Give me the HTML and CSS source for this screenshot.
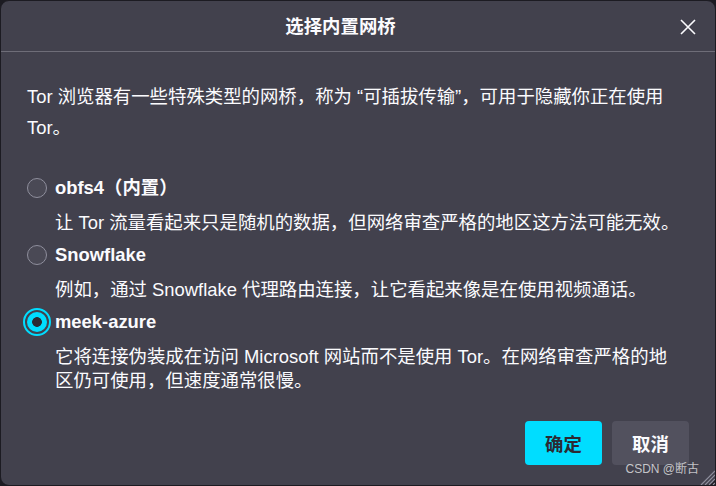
FILE: index.html
```html
<!DOCTYPE html>
<html lang="zh-CN">
<head>
<meta charset="utf-8">
<link rel="stylesheet" href="styles.css">
</head>
<body>
<div class="dialog">
  <div class="header">
    <div class="title">选择内置网桥</div>
    <button class="close" aria-label="关闭">
      <svg width="16" height="16" viewBox="0 0 16 16"><path d="M1 1 L15 15 M15 1 L1 15" stroke="#fbfbfe" stroke-width="1.6" fill="none"/></svg>
    </button>
  </div>
  <div class="body">
    <p class="intro">Tor 浏览器有一些特殊类型的网桥，称为 “可插拔传输”，可用于隐藏你正在使用<br>Tor。</p>
    <div class="options">
      <div class="option">
        <div class="label-row"><span class="radio"></span><span class="label">obfs4（内置）</span></div>
        <div class="desc">让 Tor 流量看起来只是随机的数据，但网络审查严格的地区这方法可能无效。</div>
      </div>
      <div class="option">
        <div class="label-row"><span class="radio"></span><span class="label">Snowflake</span></div>
        <div class="desc">例如，通过 Snowflake 代理路由连接，让它看起来像是在使用视频通话。</div>
      </div>
      <div class="option">
        <div class="label-row"><span class="radio checked"></span><span class="label">meek-azure</span></div>
        <div class="desc">它将连接伪装成在访问 Microsoft 网站而不是使用 Tor。在网络审查严格的地<br>区仍可使用，但速度通常很慢。</div>
      </div>
    </div>
  </div>
  <div class="footer">
    <button class="btn primary">确定</button>
    <button class="btn secondary">取消</button>
  </div>
  <div class="watermark">CSDN @断古</div>
  <svg class="grip" width="16" height="16" viewBox="0 0 16 16">
    <path d="M16 2 L2 16 M16 6 L6 16 M16 10 L10 16 M16 14 L14 16" stroke="#8f8f9d" stroke-width="1.2" fill="none"/>
  </svg>
</div>
</body>
</html>
```
FILE: styles.css
```css
* { box-sizing: border-box; }
html, body { margin: 0; padding: 0; }
body {
  width: 716px;
  height: 486px;
  background: #1c1b22;
  font-family: "Liberation Sans", "Noto Sans CJK SC", sans-serif;
  color: #fbfbfe;
  overflow: hidden;
}
.dialog {
  position: relative;
  width: 716px;
  height: 486px;
  background: #42414d;
  border: 1px solid #1c1b22;
  border-radius: 9px;
  display: flex;
  flex-direction: column;
}
.header {
  height: 51px;
  border-bottom: 1px solid #6e6d78;
  display: flex;
  align-items: center;
  justify-content: center;
  padding-right: 35px;
  position: relative;
  flex-shrink: 0;
}
.title {
  font-size: 18.4px;
  font-weight: bold;
  line-height: 24px;
  margin-top: 2px;
}
.close {
  position: absolute;
  right: 18px;
  top: 17px;
  width: 18px;
  height: 18px;
  padding: 0;
  border: none;
  background: none;
  display: flex;
  align-items: center;
  justify-content: center;
}
.body {
  padding: 0 10px 0 26px;
}
.intro {
  margin: 29px 0 0;
  font-size: 18.4px;
  line-height: 31px;
}
.options {
  margin-top: 33px;
  display: flex;
  flex-direction: column;
  gap: 8px;
}
.option {
  display: flex;
  flex-direction: column;
  gap: 11px;
}
.label-row {
  display: flex;
  align-items: center;
  height: 24px;
}
.radio {
  width: 20px;
  height: 20px;
  border-radius: 50%;
  border: 1px solid #8f8f9d;
  background: #4a4955;
  margin-right: 8px;
  flex-shrink: 0;
}
.radio.checked {
  border: none;
  background: radial-gradient(circle, #2b2a33 0 4.5px, #00ddff 5.2px);
  outline: 2px solid #00ddff;
  outline-offset: 2px;
}
.label {
  font-size: 18.4px;
  font-weight: bold;
  line-height: 24px;
}
.desc {
  padding-left: 28px;
  font-size: 18.4px;
  line-height: 24px;
}
.footer {
  margin-top: auto;
  padding: 0 26px 20px;
  display: flex;
  justify-content: flex-end;
  gap: 10px;
}
.btn {
  width: 77px;
  height: 44px;
  border: none;
  border-radius: 4px;
  font-family: "Liberation Sans", "Noto Sans CJK SC", sans-serif;
  font-size: 18.4px;
  font-weight: bold;
  padding: 0;
}
.primary {
  background: #00ddff;
  color: #2b2a33;
}
.secondary {
  background: #52515e;
  color: #fbfbfe;
}
.watermark {
  position: absolute;
  right: 16px;
  bottom: 9px;
  font-size: 12px;
  line-height: 14px;
  color: rgba(255, 255, 255, 0.7);
}
.grip {
  position: absolute;
  right: 0;
  bottom: 0;
}
```
